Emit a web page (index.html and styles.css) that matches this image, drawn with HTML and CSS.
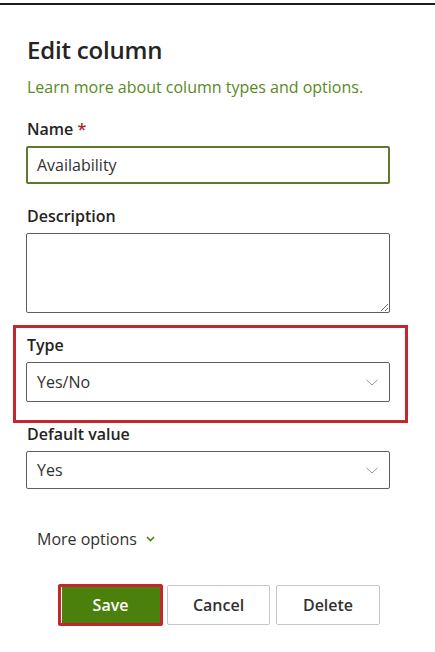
FILE: index.html
```html
<!DOCTYPE html>
<html lang="en">
<head>
<meta charset="utf-8">
<title>Edit column</title>
<link rel="stylesheet" href="styles.css">
</head>
<body>
<div class="topline"></div>
<main class="panel">
  <h1 class="title">Edit column</h1>
  <a class="learn" href="#">Learn more about column types and options.</a>

  <label class="label label-first" for="name">Name <span class="req">*</span></label>
  <input class="text-input" id="name" type="text" value="Availability">

  <label class="label" for="desc">Description</label>
  <textarea class="textarea" id="desc"></textarea>

  <section class="highlight">
    <div class="label label-in">Type</div>
    <div class="select select-type">
      <span class="select-value">Yes/No</span>
      <svg class="chev" width="12" height="7" viewBox="0 0 12 7"><path d="M0.5 0.8 L6 6 L11.5 0.8" fill="none" stroke="#9a9896" stroke-width="1"/></svg>
    </div>
  </section>

  <div class="label label-default">Default value</div>
  <div class="select select-default">
    <span class="select-value">Yes</span>
    <svg class="chev" width="12" height="7" viewBox="0 0 12 7"><path d="M0.5 0.8 L6 6 L11.5 0.8" fill="none" stroke="#9a9896" stroke-width="1"/></svg>
  </div>

  <div class="more">
    <span>More options</span>
    <svg class="more-chev" width="9" height="6" viewBox="0 0 9 6"><path d="M1 1 L4.5 4.5 L8 1" fill="none" stroke="#498205" stroke-width="1.6"/></svg>
  </div>

  <div class="actions">
    <button class="btn btn-save">Save</button>
    <button class="btn btn-cancel">Cancel</button>
    <button class="btn btn-delete">Delete</button>
  </div>
</main>
</body>
</html>
```

FILE: styles.css
```css
html, body {
  margin: 0;
  padding: 0;
  background: #ffffff;
}

body {
  font-family: "Open Sans", "Noto Sans", sans-serif;
  color: #323130;
  width: 435px;
  height: 652px;
  overflow: hidden;
}

.topline {
  margin-top: 3px;
  height: 2px;
  background: #1b1b1b;
}

.panel {
  display: flex;
  flex-direction: column;
  align-items: stretch;
  padding: 0 45px 0 26px;
}

.title {
  margin: 29px 0 0 1px;
  font-size: 24px;
  line-height: 32px;
  font-weight: 600;
  color: #252423;
  letter-spacing: -0.2px;
}

.learn {
  margin-top: 10px;
  margin-left: 1px;
  font-size: 16px;
  line-height: 22px;
  color: #5a8a24;
  text-decoration: none;
}

.label {
  display: block;
  font-size: 16px;
  line-height: 22px;
  font-weight: 600;
  color: #252423;
  margin-top: 21px;
  margin-left: 1px;
}

.label-first {
  margin-top: 20px;
}

.req {
  color: #a4262c;
  font-weight: 600;
}

.text-input {
  margin-top: 6px;
  height: 38px;
  box-sizing: border-box;
  border: 2px solid #5b7a2a;
  border-radius: 2px;
  padding: 0 9px;
  font-family: inherit;
  font-size: 16px;
  color: #323130;
  outline: none;
}

.textarea {
  margin-top: 6px;
  height: 80px;
  box-sizing: border-box;
  border: 1px solid #605e5c;
  border-radius: 2px;
  resize: both;
  font-family: inherit;
  font-size: 16px;
}

.highlight {
  margin: 12px -18px 0 -13px;
  border: 3px solid #c4262e;
  padding: 6px 15px 18px 10px;
  display: flex;
  flex-direction: column;
}

.label-in {
  margin-top: 0;
}

.label-default {
  margin-top: 0;
}

.select {
  margin-top: 6px;
  box-sizing: border-box;
  border: 1px solid #605e5c;
  border-radius: 2px;
  display: flex;
  align-items: center;
  justify-content: space-between;
  padding: 0 11px 0 10px;
  font-size: 16px;
  color: #323130;
}

.select-type {
  height: 40px;
}

.select-default {
  height: 38px;
}

.select-value {
  line-height: 20px;
}

.chev {
  display: block;
}

.more {
  margin-top: 39px;
  margin-left: 11px;
  display: flex;
  align-items: center;
  gap: 9px;
  font-size: 16px;
  line-height: 22px;
  color: #323130;
}

.more-chev {
  display: block;
}

.actions {
  margin-top: 34px;
  margin-left: 32px;
  display: flex;
  align-items: center;
}

.btn {
  font-family: inherit;
  font-size: 16px;
  font-weight: 600;
  border-radius: 2px;
  box-sizing: border-box;
  cursor: pointer;
}

.btn-save {
  width: 105px;
  height: 42px;
  background: #4b800c;
  color: #ffffff;
  border: 3px solid #c4262e;
  box-shadow: inset 1px 0 0 #ffffff;
}

.btn-cancel {
  margin-left: 4px;
  width: 103px;
  height: 40px;
  background: #ffffff;
  color: #323130;
  border: 1px solid #c8c6c4;
}

.btn-delete {
  margin-left: 6px;
  width: 104px;
  height: 40px;
  background: #ffffff;
  color: #323130;
  border: 1px solid #c8c6c4;
}
```
